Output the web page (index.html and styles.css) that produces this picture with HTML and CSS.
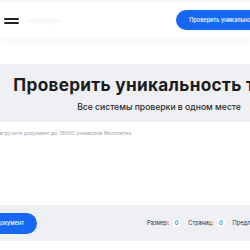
FILE: index.html
```html
<!DOCTYPE html>
<html lang="ru">
<head>
    <meta charset="UTF-8">
    <meta name="viewport" content="width=device-width, initial-scale=1.0">
    <title>Проверить уникальность текста</title>
    <link rel="stylesheet" href="styles.css">
</head>
<body>
    <header class="topbar">
        <button class="burger" type="button" aria-label="Меню">
            <span></span>
            <span></span>
        </button>
        <span class="logo">antiplagiat</span>
        <button class="top-btn" type="button">Проверить уникальность</button>
    </header>

    <main class="page">
        <section class="hero">
            <h1>Проверить уникальность текста</h1>
            <p>Все системы проверки в одном месте</p>
        </section>

        <div class="editor">
            <div class="placeholder">Вставьте текст или загрузите документ до 15000 символов бесплатно</div>
        </div>

        <div class="toolbar">
            <button class="upload-btn" type="button">Загрузить документ</button>
            <div class="stats">
                <span>Размер: <b>0</b></span>
                <span>Страниц: <b>0</b></span>
                <span>Предложений: <b>0</b></span>
            </div>
        </div>
    </main>
</body>
</html>
```

FILE: styles.css
```css
body {
    margin: 0;
    font-family: Inter, "Open Sans", sans-serif;
    background: #fff;
    color: #1b1c20;
    overflow: hidden;
}
.topbar {
    height: 38px;
    display: flex;
    align-items: center;
    padding-left: 4px;
    background: #fff;
    box-shadow: 0 3px 10px rgba(0, 0, 0, 0.05);
    border-top: 2px solid #f6f6f6;
    box-sizing: border-box;
    white-space: nowrap;
}
.burger {
    width: 15px;
    height: 6px;
    padding: 0;
    border: none;
    background: none;
    display: flex;
    flex-direction: column;
    justify-content: space-between;
    margin-top: 2px;
}
.burger span {
    display: block;
    height: 2px;
    width: 15px;
    background: #222;
    border-radius: 1px;
}
.logo {
    margin-left: 8px;
    font-size: 7px;
    color: #f3f3f3;
}
.top-btn {
    margin-left: 115px;
    height: 20px;
    padding: 0 13px;
    border: none;
    border-radius: 10px;
    background: #1668f2;
    color: #fff;
    font-family: inherit;
    font-size: 5.6px;
    font-weight: 500;
    flex-shrink: 0;
}
.page {
    width: 318px;
    padding-top: 26px;
}
.hero {
    background: #eff0f4;
    height: 58px;
    text-align: center;
    padding-top: 9px;
    box-sizing: border-box;
    white-space: nowrap;
}
.hero h1 {
    margin: 0;
    font-size: 17.2px;
    font-weight: 700;
    line-height: 24px;
    letter-spacing: 0.3px;
}
.hero p {
    margin: 5px 0 0;
    font-size: 8.6px;
    font-weight: 500;
    color: #2b2c30;
    line-height: 11px;
}
.editor {
    height: 83px;
    padding-top: 8px;
    box-sizing: border-box;
}
.placeholder {
    margin-left: -55px;
    font-size: 5.4px;
    color: #a3a3a8;
    white-space: nowrap;
}
.toolbar {
    height: 36px;
    background: #eff0f4;
    display: flex;
    align-items: center;
    white-space: nowrap;
}
.upload-btn {
    margin-left: -40px;
    width: 77px;
    height: 21px;
    border: none;
    border-radius: 11px;
    background: #1668f2;
    color: #fff;
    font-family: inherit;
    font-size: 5.6px;
    font-weight: 500;
    text-align: right;
    padding-right: 13px;
    flex-shrink: 0;
}
.stats {
    margin-left: 110px;
    display: flex;
    gap: 8px;
    font-size: 5.6px;
    color: #33343a;
}
.stats b {
    display: inline-block;
    margin-left: 2px;
    padding: 1px 2px;
    background: #fff;
    border-radius: 2px;
    color: #3b6fe0;
    font-weight: 600;
}
```
